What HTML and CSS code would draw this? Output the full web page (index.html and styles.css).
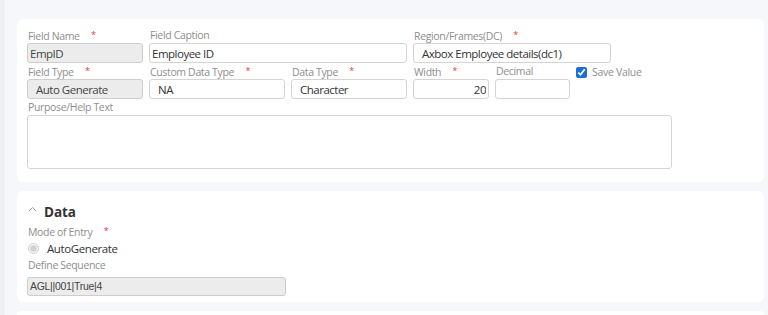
FILE: index.html
```html
<!DOCTYPE html>
<html>
<head>
<meta charset="utf-8">
<link rel="stylesheet" href="styles.css">
</head>
<body>
<div class="page">
  <div class="rail"></div>
  <main class="content">
    <section class="card card-props">
      <div class="row">
        <div class="field w-name">
          <label class="lbl">Field Name <span class="req">*</span></label>
          <input class="inp disabled tight" value="EmpID" disabled>
        </div>
        <div class="field w-caption">
          <label class="lbl">Field Caption</label>
          <input class="inp tight" value="Employee ID">
        </div>
        <div class="field w-region">
          <label class="lbl">Region/Frames(DC) <span class="req">*</span></label>
          <input class="inp" value="Axbox Employee details(dc1)">
        </div>
      </div>
      <div class="row">
        <div class="field w-name">
          <label class="lbl">Field Type <span class="req">*</span></label>
          <input class="inp disabled" value="Auto Generate" disabled>
        </div>
        <div class="field w-custom">
          <label class="lbl">Custom Data Type <span class="req">*</span></label>
          <input class="inp" value="NA">
        </div>
        <div class="field w-dtype">
          <label class="lbl">Data Type <span class="req">*</span></label>
          <input class="inp" value="Character">
        </div>
        <div class="field w-width">
          <label class="lbl">Width <span class="req">*</span></label>
          <input class="inp num" value="20">
        </div>
        <div class="field w-decimal">
          <label class="lbl">Decimal</label>
          <input class="inp" value="">
        </div>
        <label class="save"><input type="checkbox" class="chk" checked> Save Value</label>
      </div>
      <div class="field w-help">
        <label class="lbl">Purpose/Help Text</label>
        <textarea class="inp area"></textarea>
      </div>
    </section>

    <section class="card card-data">
      <div class="sec-head">
        <span class="caret">
          <svg width="9" height="6" viewBox="0 0 9 6"><path d="M1 5 L4.5 1.5 L8 5" fill="none" stroke="#9a9a9a" stroke-width="1"/></svg>
        </span>
        <span class="sec-title">Data</span>
      </div>
      <label class="lbl">Mode of Entry <span class="req">*</span></label>
      <label class="radio-row"><input type="radio" class="rad" checked disabled> AutoGenerate</label>
      <label class="lbl">Define Sequence</label>
      <input class="inp disabled seq" value="AGL||001|True|4" disabled>
    </section>

    <section class="card card-next"></section>
  </main>
</div>
</body>
</html>
```

FILE: styles.css
```css
* { box-sizing: border-box; }
html, body { margin: 0; padding: 0; }
body {
  background: #f6f7fb;
  font-family: "Open Sans", "Noto Sans", sans-serif;
  color: #333;
  overflow: hidden;
}
.page { display: flex; height: 315px; overflow: hidden; }
.rail { width: 5px; background: #eeeff2; flex: none; }
.content {
  flex: 1;
  padding: 19px 4px 0 12px;
  display: flex;
  flex-direction: column;
  gap: 9px;
}
.card {
  background: #fff;
  border-radius: 6px;
  flex: none;
}
.card-props { padding: 8px 10px 13px; height: 163px; }
.card-data { padding: 9px 10px 10px; height: 111px; }
.card-next { height: 4px; border-radius: 6px 6px 0 0; }

.row { display: flex; gap: 6px; align-items: flex-start; }
.field { display: flex; flex-direction: column; }
.w-name { width: 116px; }
.w-caption { width: 258px; }
.w-region { width: 198px; }
.w-custom { width: 136px; }
.w-dtype { width: 116px; }
.w-width { width: 76px; }
.w-decimal { width: 75px; }
.w-help { width: 645px; }

.lbl {
  font-size: 10.5px;
  letter-spacing: -0.35px;
  line-height: 16px;
  height: 16px;
  color: #8e8e8e;
  white-space: nowrap;
  display: block;
  padding-left: 1px;
}
.req { color: #e53935; font-size: 9px; margin-left: 9px; vertical-align: 2px; letter-spacing: 0; }

.inp {
  height: 20px;
  border: 1px solid #d4d4d4;
  border-radius: 3px;
  background: #fff;
  font-family: "Open Sans", "Noto Sans", sans-serif;
  font-size: 11.5px;
  letter-spacing: -0.5px;
  color: #333;
  padding: 0 8px;
  outline: none;
  width: 100%;
  margin: 0;
}
.inp.tight { padding: 0 2px; }
.inp.disabled { background: #ececec; border-color: #cdcdcd; color: #444; }
.inp.num { text-align: right; padding-right: 2px; }
.area { height: 54px; resize: none; display: block; }

.save {
  display: flex;
  align-items: center;
  gap: 5px;
  font-size: 10.5px;
  letter-spacing: -0.3px;
  color: #8e8e8e;
  height: 16px;
  margin-top: 1px;
  white-space: nowrap;
}
.chk {
  width: 11px; height: 11px; margin: 0;
  accent-color: #1a6fd8;
}

.sec-head { display: flex; align-items: center; height: 23px; gap: 7px; padding-left: 1px; }
.caret { display: flex; align-items: center; height: 10px; margin-top: -6px; }
.sec-title { font-size: 13.5px; font-weight: 700; color: #333; letter-spacing: -0.1px; }

.radio-row {
  display: flex;
  align-items: center;
  gap: 8px;
  height: 18px;
  font-size: 11.5px;
  letter-spacing: -0.4px;
  color: #333;
}
.rad { width: 11px; height: 11px; margin: 0 0 0 1px; }
.seq {
  width: 259px; height: 19px; margin-top: 1px;
  font-family: "Liberation Sans", Arial, sans-serif;
  font-size: 10.5px;
  letter-spacing: -0.3px;
  padding: 0 2px;
}
```
